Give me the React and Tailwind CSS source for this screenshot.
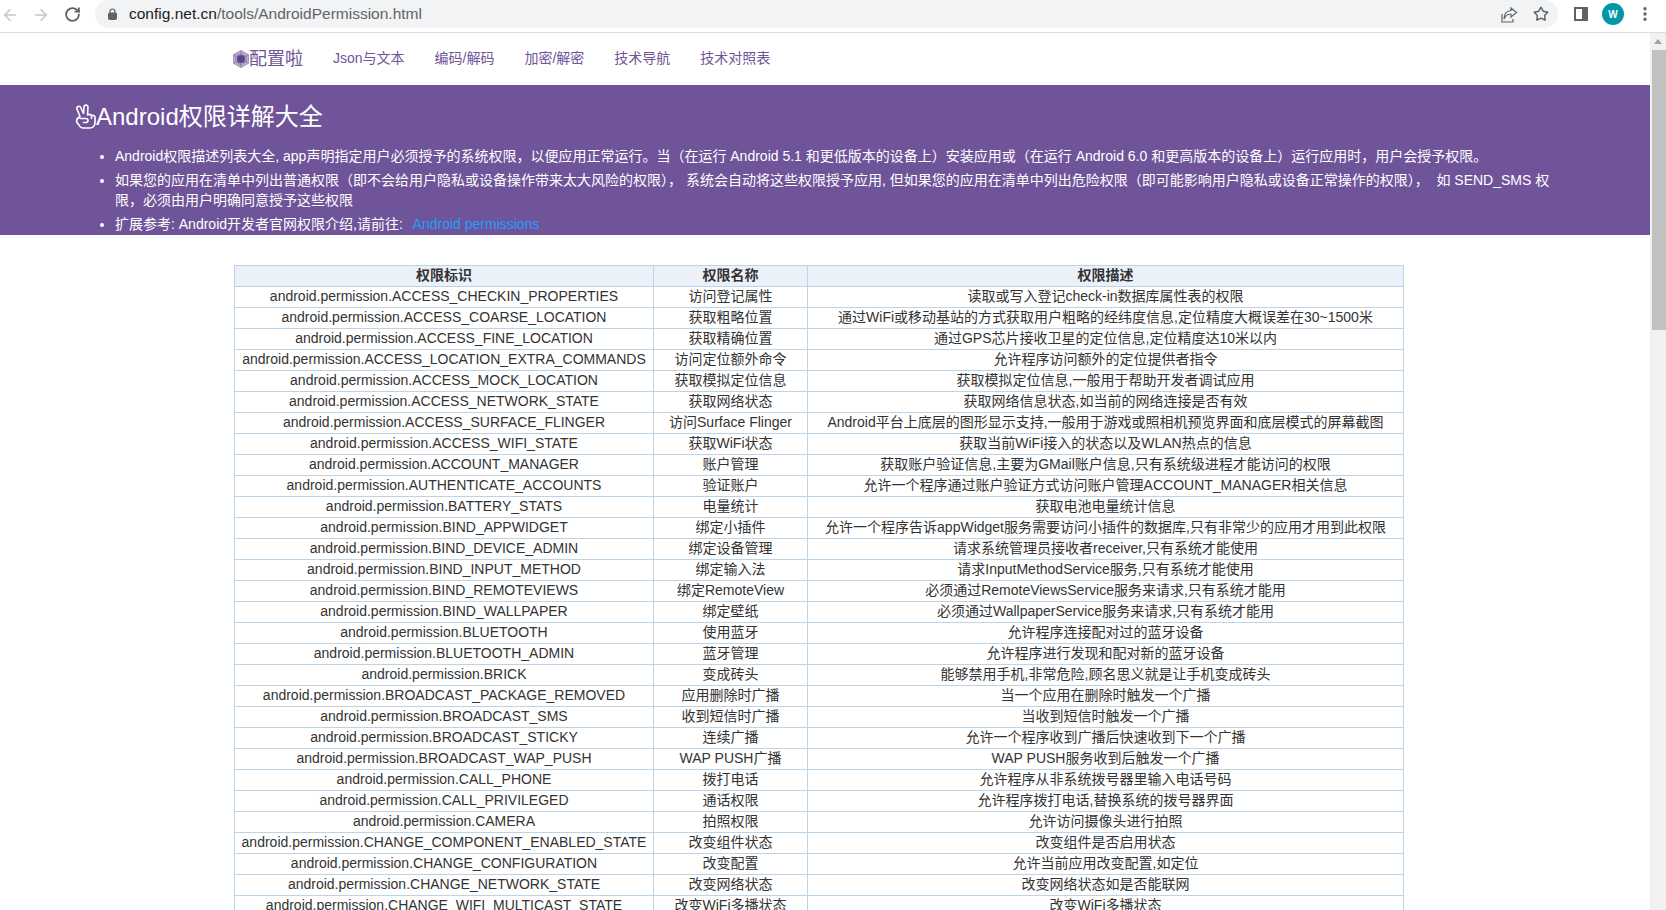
import React from 'react';
import { ArrowLeft, ArrowRight, RotateCw, Star, EllipsisVertical } from 'lucide-react';

const navLinks = ['Json与文本', '编码/解码', '加密/解密', '技术导航', '技术对照表'];

const permissions = [
  ['ACCESS_CHECKIN_PROPERTIES', '访问登记属性', '读取或写入登记check-in数据库属性表的权限'],
  ['ACCESS_COARSE_LOCATION', '获取粗略位置', '通过WiFi或移动基站的方式获取用户粗略的经纬度信息,定位精度大概误差在30~1500米'],
  ['ACCESS_FINE_LOCATION', '获取精确位置', '通过GPS芯片接收卫星的定位信息,定位精度达10米以内'],
  ['ACCESS_LOCATION_EXTRA_COMMANDS', '访问定位额外命令', '允许程序访问额外的定位提供者指令'],
  ['ACCESS_MOCK_LOCATION', '获取模拟定位信息', '获取模拟定位信息,一般用于帮助开发者调试应用'],
  ['ACCESS_NETWORK_STATE', '获取网络状态', '获取网络信息状态,如当前的网络连接是否有效'],
  ['ACCESS_SURFACE_FLINGER', '访问Surface Flinger', 'Android平台上底层的图形显示支持,一般用于游戏或照相机预览界面和底层模式的屏幕截图'],
  ['ACCESS_WIFI_STATE', '获取WiFi状态', '获取当前WiFi接入的状态以及WLAN热点的信息'],
  ['ACCOUNT_MANAGER', '账户管理', '获取账户验证信息,主要为GMail账户信息,只有系统级进程才能访问的权限'],
  ['AUTHENTICATE_ACCOUNTS', '验证账户', '允许一个程序通过账户验证方式访问账户管理ACCOUNT_MANAGER相关信息'],
  ['BATTERY_STATS', '电量统计', '获取电池电量统计信息'],
  ['BIND_APPWIDGET', '绑定小插件', '允许一个程序告诉appWidget服务需要访问小插件的数据库,只有非常少的应用才用到此权限'],
  ['BIND_DEVICE_ADMIN', '绑定设备管理', '请求系统管理员接收者receiver,只有系统才能使用'],
  ['BIND_INPUT_METHOD', '绑定输入法', '请求InputMethodService服务,只有系统才能使用'],
  ['BIND_REMOTEVIEWS', '绑定RemoteView', '必须通过RemoteViewsService服务来请求,只有系统才能用'],
  ['BIND_WALLPAPER', '绑定壁纸', '必须通过WallpaperService服务来请求,只有系统才能用'],
  ['BLUETOOTH', '使用蓝牙', '允许程序连接配对过的蓝牙设备'],
  ['BLUETOOTH_ADMIN', '蓝牙管理', '允许程序进行发现和配对新的蓝牙设备'],
  ['BRICK', '变成砖头', '能够禁用手机,非常危险,顾名思义就是让手机变成砖头'],
  ['BROADCAST_PACKAGE_REMOVED', '应用删除时广播', '当一个应用在删除时触发一个广播'],
  ['BROADCAST_SMS', '收到短信时广播', '当收到短信时触发一个广播'],
  ['BROADCAST_STICKY', '连续广播', '允许一个程序收到广播后快速收到下一个广播'],
  ['BROADCAST_WAP_PUSH', 'WAP PUSH广播', 'WAP PUSH服务收到后触发一个广播'],
  ['CALL_PHONE', '拨打电话', '允许程序从非系统拨号器里输入电话号码'],
  ['CALL_PRIVILEGED', '通话权限', '允许程序拨打电话,替换系统的拨号器界面'],
  ['CAMERA', '拍照权限', '允许访问摄像头进行拍照'],
  ['CHANGE_COMPONENT_ENABLED_STATE', '改变组件状态', '改变组件是否启用状态'],
  ['CHANGE_CONFIGURATION', '改变配置', '允许当前应用改变配置,如定位'],
  ['CHANGE_NETWORK_STATE', '改变网络状态', '改变网络状态如是否能联网'],
  ['CHANGE_WIFI_MULTICAST_STATE', '改变WiFi多播状态', '改变WiFi多播状态'],
];

const BrowserBar = () => (
  <div className="flex h-[33px] shrink-0 items-start border-b border-[#dadce0] bg-white pr-[12px]">
    <ArrowLeft className="mt-[6px] ml-[1px] h-[18px] w-[18px] text-[#c4c6c9]" />
    <ArrowRight className="mt-[6px] ml-[13px] h-[18px] w-[18px] text-[#c4c6c9]" />
    <RotateCw className="mt-[6px] ml-[14px] h-[17px] w-[17px] text-[#5f6368]" strokeWidth={2.6} />
    <div className="ml-[14px] flex h-[28px] flex-1 items-center rounded-full bg-[#f1f3f4] pl-[13px]">
      <svg className="h-[12px] w-[9px] text-[#5f6368]" viewBox="0 0 9 12" fill="none" stroke="currentColor">
        <path d="M2 5V3.500a2.500 2.500 0 0 1 5 0V5" strokeWidth="1.2" />
        <rect x="0.500" y="5" width="8" height="6.500" rx="1" fill="currentColor" />
      </svg>
      <span className="ml-[12px] text-[15.5px] text-[#202124]">
        config.net.cn<span className="text-[#5f6368]">/tools/AndroidPermission.html</span>
      </span>
      <svg className="ml-auto h-[17px] w-[17px] text-[#5f6368]" viewBox="0 0 17 17" fill="none" stroke="currentColor" strokeWidth="1.2">
        <path d="M1 8v8h11v-3" />
        <path d="M10 2l5.500 4.500L10 11V8.300C7 8 4.500 9.500 3 13c0-5 2.500-8 7-8.500z" />
      </svg>
      <Star className="mr-[9px] ml-[15px] h-[16px] w-[16px] text-[#5f6368]" strokeWidth={2.2} />
    </div>
    <div className="mt-[7px] ml-[16px] flex h-[14px] w-[14px] justify-end border-2 border-[#5f6368] bg-white">
      <div className="h-full w-[4px] bg-[#5f6368]" />
    </div>
    <div className="mt-[3px] ml-[14px] flex h-[22px] w-[22px] items-center justify-center rounded-full bg-[#0097a7] text-[10px] font-bold text-white">
      W
    </div>
    <EllipsisVertical className="mt-[5px] ml-[12px] h-[18px] w-[18px] text-[#5f6368]" strokeWidth={2.6} />
  </div>
);

const Logo = () => (
  <svg className="h-[18px] w-[16px]" viewBox="0 0 16 18" fill="none" stroke="#6f5499" strokeWidth="0.8">
    <polygon points="8,0.500 15.400,4.700 15.400,13.300 8,17.500 0.600,13.300 0.600,4.700" fill="#b3a6cc" opacity="0.8" />
    <polygon points="8,3 13.200,6 13.200,12 8,15 2.800,12 2.800,6" opacity="0.7" />
    <path d="M8 0.500V17.500M0.600 4.700L15.400 13.300M15.400 4.700L0.600 13.300" opacity="0.6" />
    <circle cx="8" cy="9" r="4" fill="#5f4489" />
  </svg>
);

const TopNav = () => (
  <div className="flex h-[52px] items-center pl-[233px] text-[#6f5499]">
    <Logo />
    <span className="text-[18px] leading-none">配置啦</span>
    <div className="ml-[30px] flex gap-[30px] pb-[2px] text-sm">
      {navLinks.map((link) => (
        <span key={link}>{link}</span>
      ))}
    </div>
  </div>
);

const HandIcon = () => (
  <svg className="h-[25px] w-[21px] shrink-0 overflow-visible" viewBox="0 0 21 25" fill="none" stroke="currentColor" strokeWidth="1.6" strokeLinejoin="round" strokeLinecap="round">
    <path d="M5 12.500L2 5a2 2 0 0 1 3.800-1.300L8.500 9.500L9 3a2 2 0 0 1 4 .2L12.500 11c2-1 3.500-.5 4 .5c1.500-.5 3-.2 3.500 1.500v6a5 5 0 0 1-5 5H8a4 4 0 0 1-3-1.500L2 18.500c-1-2 .5-4.500 3-6z" />
    <path d="M5 14.500h6a2 2 0 0 1 0 4H8.500" />
    <path d="M16.500 11.500v3" />
  </svg>
);

const Banner = () => (
  <div className="h-[150px] bg-[#6f5499] pt-[19px] pr-[95px] pl-[75px] text-white">
    <h1 className="flex h-[25px] items-center text-2xl leading-[25px]">
      <HandIcon />
      Android权限详解大全
    </h1>
    <ul className="mt-[17px] list-disc pl-[40px] text-sm leading-[20px] marker:text-white">
      <li className="mb-[4px]">
        Android权限描述列表大全, app声明指定用户必须授予的系统权限，以便应用正常运行。当（在运行 Android 5.1 和更低版本的设备上）安装应用或（在运行 Android 6.0 和更高版本的设备上）运行应用时，用户会授予权限。
      </li>
      <li className="mb-[4px]">
        如果您的应用在清单中列出普通权限（即不会给用户隐私或设备操作带来太大风险的权限）， 系统会自动将这些权限授予应用, 但如果您的应用在清单中列出危险权限（即可能影响用户隐私或设备正常操作的权限），&nbsp; 如 SEND_SMS 权限，必须由用户明确同意授予这些权限
      </li>
      <li>
        扩展参考: Android开发者官网权限介绍,请前往:&nbsp; <span className="ml-[2px] text-[#1e9fff]">Android permissions</span>
      </li>
    </ul>
  </div>
);

const PermissionTable = () => (
  <table className="mt-[30px] ml-[234px] w-[1169px] table-fixed border-collapse border border-[#bcd4e8] text-center text-sm leading-[19px] text-[#333]">
    <colgroup>
      <col className="w-[419px]" />
      <col className="w-[154px]" />
      <col className="w-[596px]" />
    </colgroup>
    <thead>
      <tr className="bg-[#ecf0f8]">
        <th className="border border-[#bcd4e8] pb-px font-bold">权限标识</th>
        <th className="border border-[#bcd4e8] pb-px font-bold">权限名称</th>
        <th className="border border-[#bcd4e8] pb-px font-bold">权限描述</th>
      </tr>
    </thead>
    <tbody>
      {permissions.map(([id, name, desc]) => (
        <tr key={id}>
          <td className="border border-[#bcd4e8] pb-px">android.permission.{id}</td>
          <td className="border border-[#bcd4e8] pb-px">{name}</td>
          <td className="border border-[#bcd4e8] pb-px">{desc}</td>
        </tr>
      ))}
    </tbody>
  </table>
);

const Scrollbar = () => (
  <div className="flex w-4 shrink-0 flex-col items-center bg-[#f1f1f1]">
    <div className="mt-[6px] h-0 w-0 border-x-[4px] border-b-[5px] border-x-transparent border-b-[#a3a3a3]" />
    <div className="mt-[6px] ml-[1px] h-[280px] w-[14px] bg-[#c1c1c1]" />
  </div>
);

export default function App() {
  return (
    <div lang="zh-CN" className="flex h-screen flex-col overflow-hidden bg-white font-['Liberation_Sans','Noto_Sans_CJK_SC',sans-serif]">
      <BrowserBar />
      <div className="flex min-h-0 flex-1">
        <div className="min-w-0 flex-1 overflow-hidden">
          <TopNav />
          <Banner />
          <PermissionTable />
        </div>
        <Scrollbar />
      </div>
    </div>
  );
}
